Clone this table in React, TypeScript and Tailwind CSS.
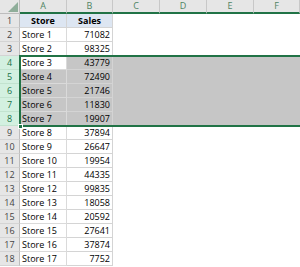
const data: [string, string][] = [
  ["Store 1", "71082"],
  ["Store 2", "98325"],
  ["Store 3", "43779"],
  ["Store 4", "72490"],
  ["Store 5", "21746"],
  ["Store 6", "11830"],
  ["Store 7", "19907"],
  ["Store 8", "37894"],
  ["Store 9", "26647"],
  ["Store 10", "19954"],
  ["Store 11", "44335"],
  ["Store 12", "99835"],
  ["Store 13", "18058"],
  ["Store 14", "20592"],
  ["Store 15", "27641"],
  ["Store 16", "37874"],
  ["Store 17", "7752"],
];

const cols = ["A", "B", "C", "D", "E", "F"];

function isSelected(row: number) {
  return row >= 4 && row <= 8;
}

function RowHeader({ n }: { n: number }) {
  const sel = isSelected(n);
  return (
    <div
      className={`h-[14px] border-b border-r text-center leading-[13px] ${
        sel
          ? "bg-[#d3f0e0] text-[#217346] border-b-[#c2e3cf] border-r-[#217346]"
          : "bg-[#e6e6e6] text-[#444] border-b-[#d4d4d4] border-r-[#bdbdbd]"
      }`}
    >
      {n}
    </div>
  );
}

function Row({ n, store, sales }: { n: number; store: string; sales: string }) {
  const sel = isSelected(n);
  const active = n === 4;
  const fill = sel ? "bg-[#c6c6c6]" : "bg-white";
  return (
    <>
      <RowHeader n={n} />
      <div
        className={`h-[14px] border-b border-r border-[#dadada] pl-[2px] leading-[13px] text-black whitespace-nowrap ${
          active ? "bg-white" : fill
        }`}
      >
        {store}
      </div>
      <div className={`h-[14px] border-b border-r border-[#d4d4d4] pr-[2px] text-right leading-[13px] text-black ${fill}`}>
        {sales}
      </div>
      <div className={`h-[14px] ${fill}`} />
      <div className={`h-[14px] ${fill}`} />
      <div className={`h-[14px] ${fill}`} />
      <div className={`h-[14px] ${fill}`} />
    </>
  );
}

export default function App() {
  return (
    <div className="relative w-[300px] h-[267px] overflow-hidden bg-white font-['Open_Sans',sans-serif] text-[9px]">
      <div className="grid grid-cols-[20px_47px_46px_47px_47px_47px_46px]">
        {/* column headers */}
        <div className="relative h-[14px] bg-[#e6e6e6] border-b border-r border-[#bdbdbd]">
          <svg className="absolute right-[1px] bottom-[1px]" width="10" height="10" viewBox="0 0 10 10">
            <polygon points="10,0 10,10 0,10" fill="#8fae9a" />
          </svg>
        </div>
        {cols.map((c) => (
          <div
            key={c}
            className="h-[14px] bg-[#e6e6e6] border-b-2 border-b-[#217346] border-r border-r-[#c8c8c8] text-center leading-[12px] text-[#4f8463]"
          >
            {c}
          </div>
        ))}

        {/* row 1 */}
        <RowHeader n={1} />
        <div className="h-[14px] bg-[#dde6f2] border-b border-r border-[#d4d4d4] text-center font-bold leading-[13px] text-black">
          Store
        </div>
        <div className="h-[14px] bg-[#dde6f2] border-b border-r border-[#d4d4d4] text-center font-bold leading-[13px] text-black">
          Sales
        </div>
        <div className="h-[14px]" />
        <div className="h-[14px]" />
        <div className="h-[14px]" />
        <div className="h-[14px]" />

        {data.map(([store, sales], i) => (
          <Row key={store} n={i + 2} store={store} sales={sales} />
        ))}
      </div>

      {/* selection outline for rows 4-8 */}
      <div className="absolute left-[19px] top-[55px] right-0 h-[72px] border-2 border-r-0 border-[#217346]" />
      <div className="absolute left-[18px] top-[124px] w-[5px] h-[5px] bg-[#217346] border border-white" />
    </div>
  );
}
